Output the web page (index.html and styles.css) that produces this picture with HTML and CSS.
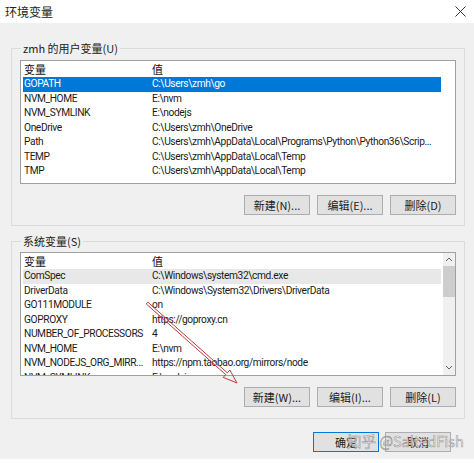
FILE: index.html
```html
<!DOCTYPE html>
<html lang="zh">
<head>
<meta charset="utf-8">
<title>环境变量</title>
<link rel="stylesheet" href="styles.css">
</head>
<body>
<div class="window">
  <div class="titlebar">
    <span class="title">环境变量</span>
    <svg class="close" width="11" height="11" viewBox="0 0 11 11"><path d="M0.5 0.5L10.5 10.5M10.5 0.5L0.5 10.5" stroke="#333" stroke-width="1" fill="none"/></svg>
  </div>
  <div class="body">
    <fieldset class="group g1">
      <legend>zmh 的用户变量(U)</legend>
      <div class="list">
        <div class="head"><span class="c1">变量</span><span class="c2">值</span></div>
        <div class="rows">
          <div class="row sel"><span class="c1">GOPATH</span><span class="c2">C:\Users\zmh\go</span></div>
          <div class="row"><span class="c1">NVM_HOME</span><span class="c2">E:\nvm</span></div>
          <div class="row"><span class="c1">NVM_SYMLINK</span><span class="c2">E:\nodejs</span></div>
          <div class="row"><span class="c1">OneDrive</span><span class="c2">C:\Users\zmh\OneDrive</span></div>
          <div class="row"><span class="c1">Path</span><span class="c2">C:\Users\zmh\AppData\Local\Programs\Python\Python36\Scrip...</span></div>
          <div class="row"><span class="c1">TEMP</span><span class="c2">C:\Users\zmh\AppData\Local\Temp</span></div>
          <div class="row"><span class="c1">TMP</span><span class="c2">C:\Users\zmh\AppData\Local\Temp</span></div>
        </div>
      </div>
      <div class="btns">
        <button class="btn">新建(N)...</button>
        <button class="btn">编辑(E)...</button>
        <button class="btn">删除(D)</button>
      </div>
    </fieldset>
    <fieldset class="group g2">
      <legend>系统变量(S)</legend>
      <div class="list scroll">
        <div class="list-main">
          <div class="head"><span class="c1">变量</span><span class="c2">值</span></div>
          <div class="rows">
            <div class="row hover"><span class="c1">ComSpec</span><span class="c2">C:\Windows\system32\cmd.exe</span></div>
            <div class="row"><span class="c1">DriverData</span><span class="c2">C:\Windows\System32\Drivers\DriverData</span></div>
            <div class="row"><span class="c1">GO111MODULE</span><span class="c2">on</span></div>
            <div class="row"><span class="c1">GOPROXY</span><span class="c2">https://goproxy.cn</span></div>
            <div class="row"><span class="c1">NUMBER_OF_PROCESSORS</span><span class="c2">4</span></div>
            <div class="row"><span class="c1">NVM_HOME</span><span class="c2">E:\nvm</span></div>
            <div class="row"><span class="c1">NVM_NODEJS_ORG_MIRR...</span><span class="c2">https://npm.taobao.org/mirrors/node</span></div>
            <div class="row"><span class="c1">NVM_SYMLINK</span><span class="c2">E:\nodejs</span></div>
          </div>
        </div>
        <div class="vscroll">
          <svg width="12" height="9" viewBox="0 0 12 9"><path d="M3 6L6 3L9 6" stroke="#606060" stroke-width="1" fill="none"/></svg>
          <div class="track"><div class="thumb"></div></div>
          <svg width="12" height="9" viewBox="0 0 12 9"><path d="M3 3L6 6L9 3" stroke="#606060" stroke-width="1" fill="none"/></svg>
        </div>
      </div>
      <div class="btns">
        <button class="btn">新建(W)...</button>
        <button class="btn">编辑(I)...</button>
        <button class="btn">删除(L)</button>
      </div>
    </fieldset>
    <div class="footer">
      <button class="btn default">确定</button>
      <button class="btn">取消</button>
    </div>
  </div>
  <svg class="arrow" width="474" height="463" viewBox="0 0 474 463">
    <polygon points="147.8,302.1 227.3,372.8 229.8,370.0 237,383 223.2,377.4 225.7,374.6 146.2,303.9" fill="none" stroke="#c33b3b" stroke-width="1"/>
  </svg>
  <div class="watermark">知乎 @SaltedFish</div>
</div>
</body>
</html>
```

FILE: styles.css
```css
* { box-sizing: border-box; }
html, body { margin: 0; padding: 0; background: #fff; }
body {
  font-family: "Noto Sans CJK SC", sans-serif;
  font-size: 11px;
  color: #111;
}
.window {
  position: relative;
  width: 474px;
  height: 463px;
  background: #fff;
  overflow: hidden;
}
.titlebar {
  height: 23px;
  display: flex;
  align-items: center;
  justify-content: space-between;
  padding: 0 8px 0 5px;
  background: #fff;
}
.title {
  font-size: 12px;
  color: #222;
}
.body {
  height: 436px;
  background: #f0f0f0;
  padding: 18px 9px 0 11px;
}
.group {
  margin: 0;
  border: 1px solid #dcdcdc;
  padding: 5px 8px 10px 8px;
  min-width: 0;
}
.group legend {
  padding: 0 2px;
  margin-left: 1px;
  height: 14px;
  line-height: 14px;
  font-size: 11px;
  color: #222;
}
.g2 { margin-top: 8px; padding-top: 4px; padding-bottom: 11px; }
.list {
  height: 124px;
  background: #fff;
  border: 1px solid #a0a0a0;
  overflow: hidden;
}
.list.scroll { display: flex; }
.list-main { flex: 1; min-width: 0; overflow: hidden; }
.head {
  height: 16px;
  display: flex;
  align-items: center;
  padding-left: 3px;
  font-size: 11px;
}
.rows { padding-left: 2px; }
.row {
  height: 14.5px;
  line-height: 14.5px;
  display: flex;
  width: 418px;
  padding-left: 1px;
  white-space: nowrap;
  font-family: Roboto, "Noto Sans CJK SC", sans-serif;
  font-size: 10.2px;
  letter-spacing: -0.38px;
  color: #1a1a1a;
}
.c1 { width: 128px; flex: none; overflow: hidden; }
.c2 { flex: 1; overflow: hidden; }
.row.sel { background: #0078d7; color: #fff; }
.row.hover { background: #e8e8e8; }
.vscroll {
  width: 12px;
  flex: none;
  background: #f0f0f0;
  display: flex;
  flex-direction: column;
  align-items: center;
  padding-top: 2px;
}
.track { flex: 1; width: 100%; padding-top: 2px; }
.thumb { height: 31px; background: #cdcdcd; }
.vscroll svg { flex: none; }
.vscroll svg:last-child { margin-bottom: 3px; }
.btns {
  display: flex;
  justify-content: flex-end;
  gap: 7px;
  margin-top: 11px;
}
.btn {
  width: 66px;
  height: 20px;
  padding: 0;
  background: #e1e1e1;
  border: 1px solid #adadad;
  font-family: "Noto Sans CJK SC", sans-serif;
  font-size: 11px;
  color: #222;
}
.footer {
  display: flex;
  justify-content: flex-end;
  gap: 6px;
  margin-top: 13px;
  padding-right: 14px;
}
.btn.default {
  border: 1.5px solid #0078d7;
}
.arrow {
  position: absolute;
  left: 0;
  top: 0;
  pointer-events: none;
}
.watermark {
  position: absolute;
  left: 347px;
  top: 432px;
  font-size: 14.5px;
  line-height: 18px;
  color: rgba(255,255,255,0.85);
  -webkit-text-stroke: 0.6px rgba(110,110,110,0.7);
  pointer-events: none;
  white-space: nowrap;
}
```
